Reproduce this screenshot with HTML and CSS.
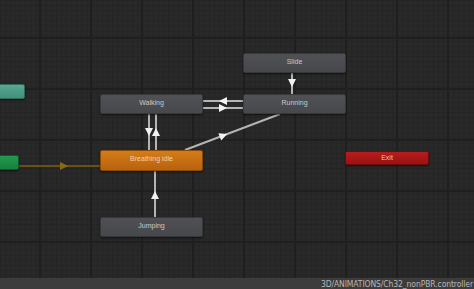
FILE: index.html
```html
<!DOCTYPE html>
<html lang="en">

<head>
    <meta charset="UTF-8">
    <meta name="viewport" content="width=device-width, initial-scale=1.0">
    <title>Animator</title>
    <link rel="stylesheet" href="styles.css">
</head>

<body>
    <div class="animator">
        <div class="graph">
            <svg class="edges" width="474" height="278" viewBox="0 0 474 278">
                <!-- entry -> breathing idle -->
                <line x1="19" y1="166" x2="100" y2="166" class="entry-line" />
                <polygon points="60,162 68,166 60,170" class="entry-arrow" />

                <!-- slide -> running -->
                <line x1="292" y1="73" x2="292" y2="94" class="edge" />
                <polygon points="288,79 296,79 292,87" class="arrow" />

                <!-- walking <-> running -->
                <line x1="203" y1="101" x2="243" y2="101" class="edge" />
                <polygon points="227,97 227,105 219,101" class="arrow" />
                <line x1="203" y1="108" x2="243" y2="108" class="edge" />
                <polygon points="219,104 219,112 227,108" class="arrow" />

                <!-- walking <-> breathing idle -->
                <line x1="149" y1="114" x2="149" y2="150" class="edge" />
                <polygon points="145,128 153,128 149,136" class="arrow" />
                <line x1="156" y1="114" x2="156" y2="150" class="edge" />
                <polygon points="152,136 160,136 156,128" class="arrow" />

                <!-- breathing idle -> running -->
                <line x1="185" y1="150" x2="280" y2="114" class="edge" />
                <polygon points="227.2,134.1 218.4,133.2 221.2,140.6" class="arrow" />

                <!-- jumping -> breathing idle -->
                <line x1="155" y1="171" x2="155" y2="217" class="edge" />
                <polygon points="151,199 159,199 155,191" class="arrow" />
            </svg>

            <div class="state entry-state any">&nbsp;</div>
            <div class="state entry-state entry">&nbsp;</div>
            <div class="state slide">Slide</div>
            <div class="state walking">Walking</div>
            <div class="state running">Running</div>
            <div class="state default idle">Breathing idle</div>
            <div class="state jumping">Jumping</div>
            <div class="state exit">Exit</div>
        </div>
        <div class="statusbar">
            <span class="path">3D/ANIMATIONS/Ch32_nonPBR.controller</span>
        </div>
    </div>
</body>

</html>
```

FILE: styles.css
```css
* {
    box-sizing: border-box;
}

html,
body {
    margin: 0;
    padding: 0;
    width: 474px;
    height: 289px;
    overflow: hidden;
    background: #282828;
}

.animator {
    display: flex;
    flex-direction: column;
    width: 474px;
    height: 289px;
    font-family: "Liberation Sans", Arial, sans-serif;
}

.graph {
    position: relative;
    flex: 1;
    overflow: hidden;
    background-color: #292929;
    background-image:
        linear-gradient(to right, #1f1f1f 0, #1f1f1f 2px, transparent 2px),
        linear-gradient(to bottom, #1f1f1f 0, #1f1f1f 2px, transparent 2px),
        linear-gradient(to right, #242424 0, #242424 1px, transparent 1px),
        linear-gradient(to bottom, #242424 0, #242424 1px, transparent 1px);
    background-size: 51px 51px, 51px 51px, 5.1px 5.1px, 5.1px 5.1px;
    background-position: 39px 0, 0 37px, 0 0, 0 0;
}

.edges {
    position: absolute;
    left: 0;
    top: 0;
}

.edge {
    stroke: #b4b4b4;
    stroke-width: 2;
}

.arrow {
    fill: #f2f2f2;
}

.entry-line {
    stroke: #6a5010;
    stroke-width: 2;
}

.entry-arrow {
    fill: #8a6a10;
}

.state {
    position: absolute;
    width: 103px;
    height: 20px;
    display: flex;
    align-items: center;
    justify-content: center;
    padding-bottom: 4px;
    font-size: 7px;
    color: #c9c9c9;
    background: linear-gradient(#505155, #47484c);
    border: 1px solid #37383b;
    border-radius: 2px;
    box-shadow: 0 1px 2px rgba(0, 0, 0, 0.6);
}

.slide {
    left: 243px;
    top: 53px;
}

.walking {
    left: 100px;
    top: 94px;
}

.running {
    left: 243px;
    top: 94px;
}

.idle {
    left: 100px;
    top: 150px;
    height: 21px;
    color: #f0d2b0;
    background: linear-gradient(#d47c1a, #b9620d);
    border-color: #8a4a0a;
}

.jumping {
    left: 100px;
    top: 217px;
}

.exit {
    left: 345px;
    top: 151px;
    width: 84px;
    height: 14px;
    padding-bottom: 1px;
    color: #e8c0c0;
    background: linear-gradient(#b81c1c, #9a1212);
    border-color: #6e0c0c;
}

.any {
    left: -10px;
    top: 84px;
    width: 35px;
    height: 15px;
    background: linear-gradient(#58a892, #43907c);
    border-color: #2f6a5a;
}

.entry {
    left: -10px;
    top: 155px;
    width: 29px;
    height: 15px;
    background: linear-gradient(#23994f, #18803f);
    border-color: #0f5a2a;
}

.statusbar {
    height: 11px;
    background: #3c3c3c;
    display: flex;
    justify-content: flex-end;
    align-items: center;
    overflow: hidden;
}

.path {
    font-family: "DejaVu Sans Condensed", "DejaVu Sans", sans-serif;
    font-stretch: condensed;
    font-size: 8.5px;
    letter-spacing: -0.1px;
    color: #b8b8b8;
    white-space: nowrap;
    margin-right: 1px;
}
```
